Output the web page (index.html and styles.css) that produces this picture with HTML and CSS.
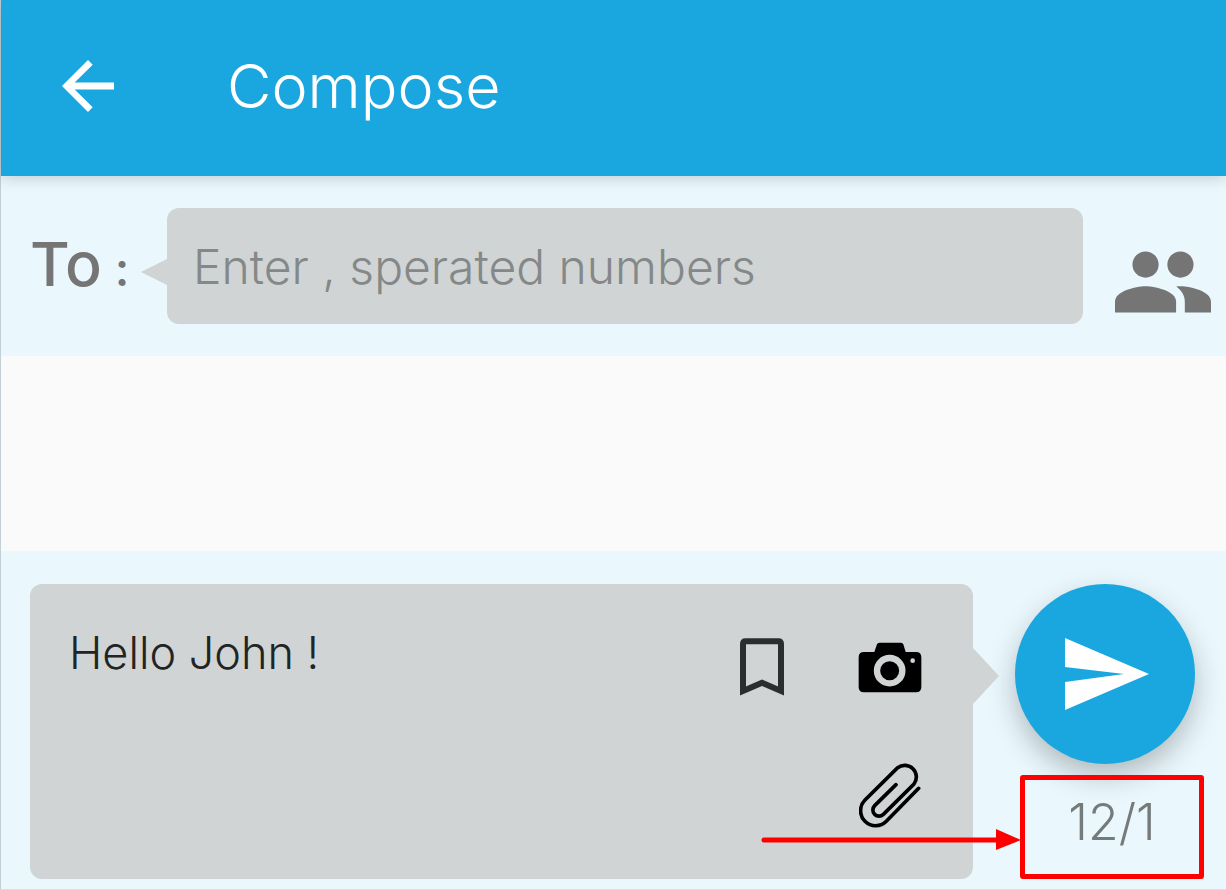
FILE: index.html
```html
<!DOCTYPE html>
<html lang="en">
<head>
    <meta charset="UTF-8">
    <meta name="viewport" content="width=device-width, initial-scale=1">
    <title>Compose</title>
    <link rel="stylesheet" href="styles.css">
</head>
<body>
<div class="screen">
    <header class="toolbar">
        <button class="icon-button" type="button" aria-label="Back">
            <svg width="78" height="78" viewBox="0 0 24 24" fill="#fff">
                <path d="M20 10.900H7.900l5.550-5.450L12 4l-8 8 8 8 1.450-1.450L7.900 13.100H20z"/>
            </svg>
        </button>
        <h1 class="title">Compose</h1>
    </header>

    <main class="content">
        <section class="recipients">
            <label class="to-label" for="numbers">To<span class="colon"> :</span></label>
            <div class="to-bubble">
                <input class="to-input" id="numbers" type="text" placeholder="Enter , sperated numbers">
            </div>
            <button class="icon-button contacts" type="button" aria-label="Contacts">
                <svg width="96" height="62" viewBox="1 5 22 14" fill="#757575">
                    <path d="M16 11a3 3 0 1 0 0-6 3 3 0 0 0 0 6zM8 11a3 3 0 1 0 0-6 3 3 0 0 0 0 6z"/>
                    <path d="M8 13c-2.330 0-7 1.170-7 3.500V19h14v-2.500c0-2.330-4.670-3.500-7-3.500z"/>
                    <path d="M16 13c-.29 0-.62.02-.97.05 1.160.84 1.970 1.970 1.970 3.450V19h6v-2.500c0-2.330-4.670-3.500-7-3.500z"/>
                </svg>
            </button>
        </section>

        <section class="messages"></section>

        <form class="composer">
            <div class="message-bubble">
                <textarea class="message" aria-label="Message">Hello John !</textarea>
                <div class="tools">
                    <button class="icon-button" type="button" aria-label="Templates">
                        <svg width="46" height="58" viewBox="57 84 138 174" fill="none" stroke="#2b2e2e" stroke-width="18">
                            <path d="M69 243V102q0-8 8-8H175q8 0 8 8V243L126 218Z"/>
                        </svg>
                    </button>
                    <button class="icon-button" type="button" aria-label="Camera">
                        <svg width="64" height="51" viewBox="416 95 192 153">
                            <path d="M434 125H465L473 102Q475 97 480 97H545Q550 97 552 102L559 125H590Q606 125 606 141V230Q606 246 590 246H434Q418 246 418 230V141Q418 125 434 125Z"/>
                            <circle cx="511" cy="181" r="38" fill="none" stroke="#d0d4d4" stroke-width="19"/>
                            <circle cx="580" cy="151" r="7" fill="#d0d4d4"/>
                        </svg>
                    </button>
                    <button class="icon-button clip" type="button" aria-label="Attach file">
                        <svg width="62" height="66" viewBox="418 458 186 198" fill="none" stroke="#000" stroke-width="11" stroke-linecap="round">
                            <path d="M597 537L500 636A45 45 0 0 1 436 572L534 475A35 35 0 0 1 583 524L491 615A18 18 0 0 1 465 589L529 526"/>
                        </svg>
                    </button>
                </div>
            </div>
            <div class="send-column">
                <button class="send" type="submit" aria-label="Send">
                    <svg width="84" height="72" viewBox="0 0 84 72" fill="#fff">
                        <path d="M0 0L84 36L0 72V44L59 36L0 29Z"/>
                    </svg>
                </button>
                <div class="counter">
                    12/1
                    <svg class="pointer" width="260" height="24" viewBox="0 0 260 24" fill="#f00">
                        <path d="M3 12H240" stroke="#f00" stroke-width="5" stroke-linecap="round"/>
                        <path d="M235 1L260 12L235 22Z"/>
                    </svg>
                </div>
            </div>
        </form>
    </main>
</div>
</body>
</html>
```

FILE: styles.css
```css
* {
    box-sizing: border-box;
}
body {
    margin: 0;
    font-family: Inter, "Liberation Sans", sans-serif;
    font-weight: 300;
    background: #fafafa;
}
.screen {
    display: flex;
    flex-direction: column;
    min-height: 100vh;
    border-left: 1px solid #c3d0d5;
    border-bottom: 1px solid #d3e0e5;
}
.icon-button {
    display: flex;
    align-items: center;
    justify-content: center;
    padding: 0;
    border: none;
    background: none;
    cursor: pointer;
}
.toolbar {
    display: flex;
    align-items: center;
    gap: 100px;
    padding: 46px 48px 50px;
    background: #1aa6df;
    box-shadow: 0 2px 14px rgba(0, 0, 0, 0.18);
    position: relative;
}
.title {
    margin: 0;
    font-size: 61px;
    line-height: 80px;
    font-weight: 300;
    color: #fff;
}
.content {
    flex: 1;
    display: flex;
    flex-direction: column;
}
.recipients {
    display: flex;
    align-items: center;
    padding: 32px 15px 32px 29px;
    background: #eaf8fd;
}
.to-label {
    width: 111px;
    font-size: 61px;
    font-weight: 500;
    line-height: 80px;
    color: #757575;
    white-space: nowrap;
}
.colon {
    font-size: 48px;
}
.to-bubble {
    display: flex;
    align-items: center;
    flex: 1;
    min-width: 0;
}
.to-bubble::before {
    content: "";
    margin-top: 12px;
    border: 13px solid transparent;
    border-right: 26px solid #d0d4d4;
    border-left: none;
}
.to-input {
    flex: 1;
    min-width: 0;
    height: 116px;
    padding: 0 26px;
    border: none;
    border-radius: 12px;
    background: #d0d4d4;
    font: inherit;
    font-size: 48px;
    color: #212424;
}
.to-input::placeholder {
    color: #858888;
    opacity: 1;
}
.contacts {
    margin-left: 32px;
    padding-top: 32px;
}
.messages {
    flex: 1;
}
.composer {
    display: flex;
    gap: 42px;
    padding: 33px 22px 10px 29px;
    background: #eaf8fd;
}
.message-bubble {
    display: flex;
    flex: 1;
    min-width: 0;
    padding: 19px;
    border-radius: 12px;
    background: #d0d4d4;
    position: relative;
}
.message-bubble::after {
    content: "";
    position: absolute;
    left: 100%;
    top: 64px;
    border: 28px solid transparent;
    border-left: 26px solid #d0d4d4;
    border-right: none;
}
.message {
    flex: 1;
    min-width: 0;
    padding: 20px;
    border: none;
    resize: none;
    background: none;
    font: inherit;
    font-size: 45px;
    line-height: 60px;
    color: #212424;
}
.tools {
    display: grid;
    grid-template-columns: 128px 128px;
    grid-template-rows: 128px 128px;
}
.clip {
    grid-column: 2;
}
.send-column {
    display: flex;
    flex-direction: column;
    gap: 11px;
    width: 189px;
}
.send {
    display: flex;
    align-items: center;
    justify-content: center;
    width: 180px;
    height: 180px;
    padding: 0 0 0 4px;
    border: none;
    border-radius: 50%;
    background: #1aa6df;
    box-shadow: 0 12px 28px rgba(0, 0, 0, 0.25);
    cursor: pointer;
}
.counter {
    align-self: flex-end;
    width: 184px;
    height: 104px;
    border: 5px solid #f00;
    border-radius: 3px;
    font-size: 50px;
    line-height: 84px;
    text-align: center;
    color: #757a7b;
    position: relative;
}
/* arrow that points at the counter */
.pointer {
    position: absolute;
    right: 100%;
    top: 48px;
    margin-right: 4px;
}
```
